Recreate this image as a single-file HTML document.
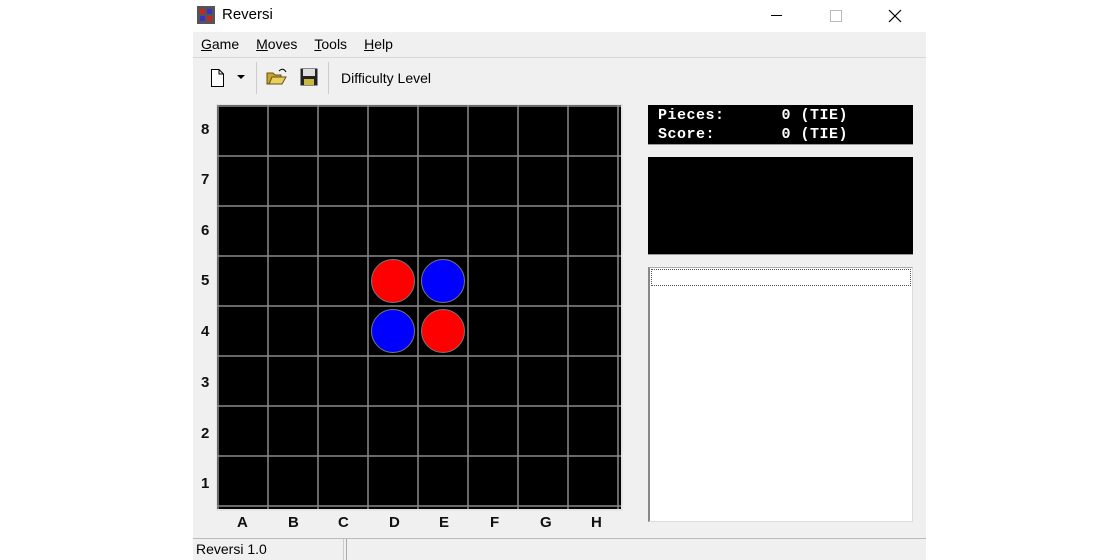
<!DOCTYPE html>
<html><head><style>
body{margin:0;width:1120px;height:560px;background:#fff;position:relative;overflow:hidden;font-family:"Liberation Sans",sans-serif;}
.a{position:absolute;}
.win{left:193px;top:32px;width:733px;height:528px;background:#f0f0f0;}
.menu span{margin-right:17px;font-size:14px;}
u{text-decoration:underline;}
.mono{font-family:"Liberation Mono","DejaVu Sans Mono",monospace;color:#fff;font-size:15px;font-weight:bold;white-space:pre;line-height:19px;letter-spacing:0.5px;}
.lbl{font-weight:bold;font-size:15px;color:#111;}
</style></head><body>
<div class="a" style="left:197px;top:6px;width:18px;height:18px;background:#555;"></div>
<div class="a" style="left:200px;top:9px;width:5px;height:5px;background:#c22"></div>
<div class="a" style="left:207px;top:9px;width:5px;height:5px;background:#33c"></div>
<div class="a" style="left:200px;top:16px;width:5px;height:5px;background:#33c"></div>
<div class="a" style="left:207px;top:16px;width:5px;height:5px;background:#c22"></div>
<div class="a" style="left:222px;top:6px;font-size:15px;color:#000">Reversi</div>
<div class="a" style="left:771px;top:15px;width:11px;height:1px;background:#000"></div>
<div class="a" style="left:830px;top:10px;width:10px;height:10px;border:1px solid #bbb"></div>
<svg class="a" style="left:888px;top:9px" width="14" height="14"><path d="M1 1L13 13M13 1L1 13" stroke="#000" stroke-width="1.2"/></svg>

<div class="a win"></div>
<div class="a menu" style="left:201px;top:36px;"><span><u>G</u>ame</span><span><u>M</u>oves</span><span><u>T</u>ools</span><span><u>H</u>elp</span></div>
<div class="a" style="left:193px;top:57px;width:733px;height:1px;background:#d8d8d8"></div>
<svg class="a" style="left:210px;top:68px" width="40" height="20"><path d="M1.5 1.5H9L13.5 6V18.5H1.5Z M9 1.5V6H13.5" fill="#fff" stroke="#000"/><path d="M27 7H35L31 11Z" fill="#000"/></svg>
<div class="a" style="left:256px;top:62px;width:1px;height:32px;background:#ccc"></div>
<svg class="a" style="left:266px;top:67px" width="22" height="20"><path d="M1 6H7L9 8H15V17H1Z" fill="#c9a630" stroke="#665010"/><path d="M3 17L6 10H20L16 17Z" fill="#e8d060" stroke="#665010"/><path d="M13 4Q17 0 20 5" stroke="#000" fill="none"/></svg>
<svg class="a" style="left:300px;top:68px" width="19" height="19"><rect x="0.5" y="0.5" width="17" height="17" fill="#222"/><rect x="3" y="1" width="12" height="7" fill="#ddd"/><rect x="4" y="11" width="10" height="6" fill="#c9b93a"/></svg>
<div class="a" style="left:328px;top:62px;width:1px;height:32px;background:#ccc"></div>
<div class="a" style="left:341px;top:70px;font-size:14px;color:#000">Difficulty Level</div>

<div class="a" style="left:216px;top:104px;width:407px;height:407px;background:#e4e4e4"></div>
<svg class="a" style="left:217px;top:105px" width="404" height="404">
<rect x="0" y="0" width="404" height="404" fill="#000"/>
<g stroke="#8a8a8a" stroke-width="1.5">
<path d="M1 0V404M51 0V404M101 0V404M151 0V404M201 0V404M251 0V404M301 0V404M351 0V404M401 0V404"/>
<path d="M0 1H404M0 51H404M0 101H404M0 151H404M0 201H404M0 251H404M0 301H404M0 351H404M0 401H404"/>
</g>
<circle cx="176" cy="176" r="21.5" fill="#f00" stroke="#777"/>
<circle cx="226" cy="176" r="21.5" fill="#00f" stroke="#777"/>
<circle cx="176" cy="226" r="21.5" fill="#00f" stroke="#777"/>
<circle cx="226" cy="226" r="21.5" fill="#f00" stroke="#777"/>
</svg>
<div class="a lbl" style="left:201px;top:121px">8</div>
<div class="a lbl" style="left:201px;top:171px">7</div>
<div class="a lbl" style="left:201px;top:222px">6</div>
<div class="a lbl" style="left:201px;top:272px">5</div>
<div class="a lbl" style="left:201px;top:323px">4</div>
<div class="a lbl" style="left:201px;top:374px">3</div>
<div class="a lbl" style="left:201px;top:425px">2</div>
<div class="a lbl" style="left:201px;top:475px">1</div>
<div class="a lbl" style="left:237px;top:514px">A</div>
<div class="a lbl" style="left:288px;top:514px">B</div>
<div class="a lbl" style="left:338px;top:514px">C</div>
<div class="a lbl" style="left:389px;top:514px">D</div>
<div class="a lbl" style="left:439px;top:514px">E</div>
<div class="a lbl" style="left:490px;top:514px">F</div>
<div class="a lbl" style="left:540px;top:514px">G</div>
<div class="a lbl" style="left:591px;top:514px">H</div>

<div class="a" style="left:648px;top:105px;width:265px;height:39px;background:#000;border-bottom:1px solid #999"></div>
<div class="a mono" style="left:658px;top:106px">Pieces:      0 (TIE)
Score:       0 (TIE)</div>
<div class="a" style="left:648px;top:157px;width:265px;height:97px;background:#000;border-bottom:1px solid #999"></div>
<div class="a" style="left:648px;top:267px;width:262px;height:253px;background:#fff;border-left:2px solid #888;border-top:1px solid #aaa;border-right:1px solid #ddd;border-bottom:1px solid #ddd"></div>
<div class="a" style="left:651px;top:269px;width:258px;height:15px;border:1px dotted #555"></div>

<div class="a" style="left:193px;top:538px;width:733px;height:1px;background:#bbb"></div>
<div class="a" style="left:193px;top:539px;width:150px;height:21px;border-right:1px solid #ccc"></div>
<div class="a" style="left:346px;top:539px;width:1px;height:21px;background:#aaa"></div>
<div class="a" style="left:196px;top:541px;font-size:14px;color:#000">Reversi 1.0</div>
</body></html>
